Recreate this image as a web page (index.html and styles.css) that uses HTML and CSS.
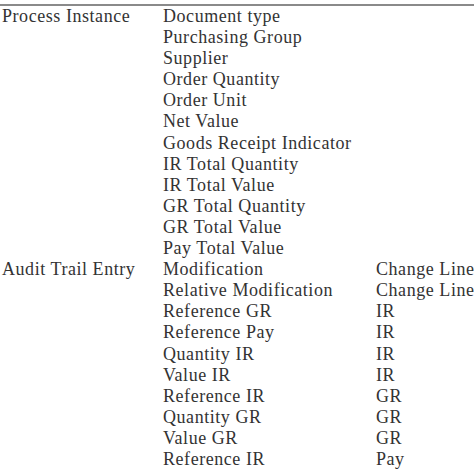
FILE: index.html
```html
<!DOCTYPE html>
<html>
<head>
<meta charset="utf-8">
<link rel="stylesheet" href="styles.css">
</head>
<body>
<div class="table">
  <div class="rule"></div>
  <div class="grid">
    <div class="c1">Process Instance</div><div class="c2">Document type</div><div class="c3"></div>
    <div class="c1"></div><div class="c2">Purchasing Group</div><div class="c3"></div>
    <div class="c1"></div><div class="c2">Supplier</div><div class="c3"></div>
    <div class="c1"></div><div class="c2">Order Quantity</div><div class="c3"></div>
    <div class="c1"></div><div class="c2">Order Unit</div><div class="c3"></div>
    <div class="c1"></div><div class="c2">Net Value</div><div class="c3"></div>
    <div class="c1"></div><div class="c2">Goods Receipt Indicator</div><div class="c3"></div>
    <div class="c1"></div><div class="c2">IR Total Quantity</div><div class="c3"></div>
    <div class="c1"></div><div class="c2">IR Total Value</div><div class="c3"></div>
    <div class="c1"></div><div class="c2">GR Total Quantity</div><div class="c3"></div>
    <div class="c1"></div><div class="c2">GR Total Value</div><div class="c3"></div>
    <div class="c1"></div><div class="c2">Pay Total Value</div><div class="c3"></div>
    <div class="c1">Audit Trail Entry</div><div class="c2">Modification</div><div class="c3">Change Line</div>
    <div class="c1"></div><div class="c2">Relative Modification</div><div class="c3">Change Line</div>
    <div class="c1"></div><div class="c2">Reference GR</div><div class="c3">IR</div>
    <div class="c1"></div><div class="c2">Reference Pay</div><div class="c3">IR</div>
    <div class="c1"></div><div class="c2">Quantity IR</div><div class="c3">IR</div>
    <div class="c1"></div><div class="c2">Value IR</div><div class="c3">IR</div>
    <div class="c1"></div><div class="c2">Reference IR</div><div class="c3">GR</div>
    <div class="c1"></div><div class="c2">Quantity GR</div><div class="c3">GR</div>
    <div class="c1"></div><div class="c2">Value GR</div><div class="c3">GR</div>
    <div class="c1"></div><div class="c2">Reference IR</div><div class="c3">Pay</div>
  </div>
</div>
```
FILE: styles.css
```css
html, body {
  margin: 0;
  padding: 0;
  background: #ffffff;
  overflow: hidden;
}
.table {
  width: 474px;
  height: 474px;
  padding-top: 4px;
  box-sizing: border-box;
  font-family: "Liberation Serif", serif;
  font-size: 18px;
  letter-spacing: 0.55px;
  color: #333333;
}
.rule {
  height: 2px;
  background: #8a8a8a;
}
.grid {
  display: grid;
  grid-template-columns: 161px 213px 120px;
  grid-auto-rows: 21.1px;
  line-height: 21.1px;
  padding-left: 2px;
  white-space: nowrap;
}
```
